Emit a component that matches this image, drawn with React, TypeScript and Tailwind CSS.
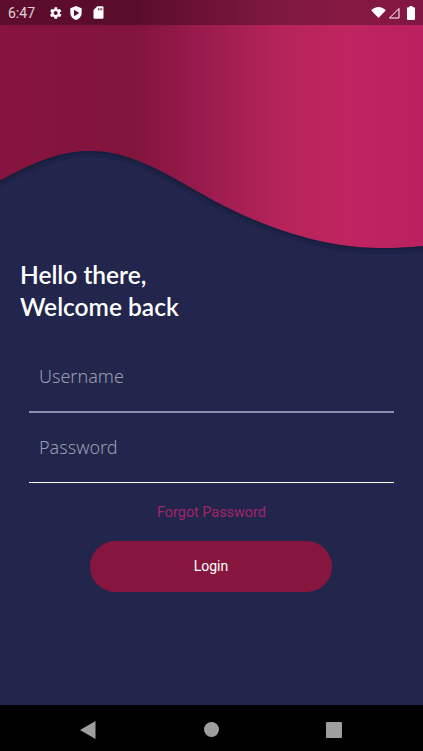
const edge = "M-10 186C28 165 58 151 90 151C128 151 160 170 200 193C250 222 320 250 385 248C400 248 412 247 433 245";
const wave = `${edge}V270H-10Z`;

function StatusBar() {
  return (
    <div className="flex h-[25px] items-center justify-between bg-black/30 pl-[8px] pr-[8px] text-white">
      <div className="flex items-center">
        <span className="font-['Roboto',sans-serif] text-[14px] leading-none text-white/80">6:47</span>
        {/* settings gear */}
        <svg viewBox="0 0 24 24" className="ml-[12px] h-[16px] w-[16px]" fill="#fff">
          <path d="M19.400 13a7.500 7.500 0 0 0 0-2l2.100-1.600-2-3.500-2.500 1a7.500 7.500 0 0 0-1.700-1L15.400 3.200h-4l-.4 2.700a7.500 7.500 0 0 0-1.700 1l-2.500-1-2 3.500L6.600 11a7.500 7.500 0 0 0 0 2l-2.100 1.600 2 3.500 2.500-1a7.500 7.500 0 0 0 1.700 1l.4 2.700h4l.4-2.700a7.500 7.500 0 0 0 1.700-1l2.500 1 2-3.500zM13 15a3 3 0 1 1 0-6 3 3 0 0 1 0 6z" />
        </svg>
        {/* shield with play */}
        <svg viewBox="0 0 24 24" className="ml-[5px] h-[16px] w-[16px]">
          <path d="M12 1.500 3.500 5v6.500c0 5 3.600 9.400 8.500 11 4.900-1.600 8.500-6 8.500-11V5z" fill="#fff" />
          <path d="M9 7v10l8-5z" fill="#5e1033" />
        </svg>
        {/* sd card */}
        <svg viewBox="0 0 24 24" className="ml-[7px] h-[15px] w-[15px]" fill="#fff">
          <path d="M10 2 4 8v12a2 2 0 0 0 2 2h12a2 2 0 0 0 2-2V4a2 2 0 0 0-2-2zm1 3h1.500v3.500H11zm2.800 0h1.500v3.500h-1.500zm2.800 0h1.500v3.500h-1.500z" />
        </svg>
      </div>
      <div className="flex items-center">
        {/* wifi */}
        <svg viewBox="0 0 16 12" className="h-[11px] w-[15px]" fill="#fff">
          <path d="M0 3.500C2 1.400 5 0 8 0s6 1.400 8 3.500L8 12z" />
        </svg>
        {/* cell signal outline */}
        <svg viewBox="0 0 12 12" className="ml-[2px] h-[12px] w-[12px]" fill="none" stroke="#fff" strokeWidth="1">
          <path d="M11 1.500V11H1.500z" />
        </svg>
        {/* battery */}
        <svg viewBox="0 0 8 14" className="ml-[7px] h-[14px] w-[8px]" fill="#fff">
          <path d="M2.500 0h3v1.200H7a1 1 0 0 1 1 1V13a1 1 0 0 1-1 1H1a1 1 0 0 1-1-1V2.200a1 1 0 0 1 1-1h1.500z" />
        </svg>
      </div>
    </div>
  );
}

function Field({ label, box }: { label: string; box: string }) {
  return (
    <div className={`mx-[29px] flex items-start pl-[10px] ${box}`}>
      <span className="font-['Noto_Sans',sans-serif] text-[18px] font-light leading-[28px] text-[#9a9cb0]">{label}</span>
    </div>
  );
}

export default function App() {
  return (
    <div className="relative flex h-[751px] w-[423px] flex-col overflow-hidden bg-[#22264c]">
      <div className="absolute inset-x-0 top-0 h-[260px] bg-[linear-gradient(90deg,#87143f_0%,#80143c_31%,#981a4c_47%,#b52459_66%,#bf255f_82%,#bb2060_100%)]" />
      <svg viewBox="0 0 423 260" className="absolute inset-x-0 top-0 h-[260px] w-[423px]">
        <defs>
          <clipPath id="waveClip">
            <path d={wave} />
          </clipPath>
          <filter id="edgeBlur" x="-5%" y="-30%" width="110%" height="160%">
            <feGaussianBlur stdDeviation="2" />
          </filter>
        </defs>
        <path d={wave} fill="#22264c" />
        {/* soft dark edge just inside the wave */}
        <g clipPath="url(#waveClip)">
          <path d={edge} fill="none" stroke="#131a3a" strokeWidth="5" filter="url(#edgeBlur)" />
        </g>
      </svg>

      <div className="relative flex flex-1 flex-col">
        <StatusBar />
        <div className="mt-[234px] pl-[20px] font-['Lato',sans-serif] text-[24.5px] font-semibold leading-[32px] text-white">
          <div>Hello there,</div>
          <div>Welcome back</div>
        </div>
        <div className="mt-[19px] flex flex-col">
          <Field label="Username" box="h-[71px] border-b-2 border-[#8a8dab] pt-[20px]" />
          <Field label="Password" box="h-[70px] border-b border-white pt-[20px]" />
        </div>
        <button className="mt-[21px] self-center font-['Roboto',sans-serif] text-[14.400px] leading-[18px] text-[#a3246a]">
          Forgot Password
        </button>
        <button className="ml-[90px] mt-[19px] h-[51px] w-[242px] self-start rounded-full bg-[#86163e] font-['Roboto',sans-serif] text-[14px] text-white">
          Login
        </button>
      </div>

      <div className="relative flex h-[46px] items-center bg-black">
        <svg viewBox="0 0 16 18" className="absolute left-[80px] top-[16px] h-[18px] w-[16px]" fill="#9e9e9e">
          <path d="M15.500 0v18L0 9z" />
        </svg>
        <div className="absolute left-[204px] top-[17px] h-[15px] w-[15px] rounded-full bg-[#9e9e9e]" />
        <div className="absolute left-[326px] top-[17px] h-[16px] w-[16px] rounded-[1px] bg-[#9e9e9e]" />
      </div>
    </div>
  );
}
